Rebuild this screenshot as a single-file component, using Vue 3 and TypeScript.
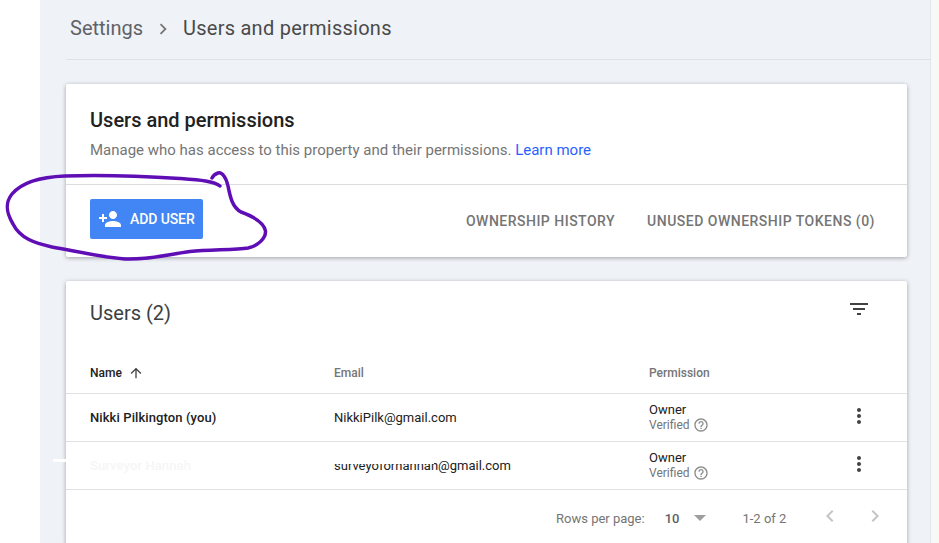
<script setup lang="ts">
interface UserRow {
  name: string
  email: string
  hidden: boolean
}

const users: UserRow[] = [
  { name: 'Nikki Pilkington (you)', email: 'NikkiPilk@gmail.com', hidden: false },
  { name: 'Surveyor Hannah', email: 'surveyoforhannah@gmail.com', hidden: true },
]
</script>

<template>
  <div class="page">
    <div class="gutter"></div>
    <main class="main">
      <header class="crumbs">
        <span class="crumb">Settings</span>
        <svg class="crumb-sep" viewBox="0 0 24 24" width="22" height="22" aria-hidden="true">
          <path d="M8.6 16.6 13.2 12 8.6 7.4 10 6l6 6-6 6z" fill="#757575" />
        </svg>
        <span class="crumb current">Users and permissions</span>
      </header>

      <section class="card top-card">
        <div class="intro">
          <h1>Users and permissions</h1>
          <p>Manage who has access to this property and their permissions. <a>Learn more</a></p>
        </div>
        <div class="actions">
          <button class="add-btn" type="button">
            <svg viewBox="0 0 24 24" width="24" height="24" aria-hidden="true">
              <path fill="#fff" d="M15 12c2.21 0 4-1.79 4-4s-1.79-4-4-4-4 1.79-4 4 1.79 4 4 4zm-9-2V7H4v3H1v2h3v3h2v-3h3v-2H6zm9 4c-2.67 0-8 1.34-8 4v2h16v-2c0-2.66-5.33-4-8-4z" />
            </svg>
            <span>ADD USER</span>
          </button>
          <div class="links">
            <span>OWNERSHIP HISTORY</span>
            <span>UNUSED OWNERSHIP TOKENS (0)</span>
          </div>
        </div>
      </section>

      <section class="card users-card">
        <div class="users-head">
          <h2>Users (2)</h2>
          <svg class="filter" viewBox="0 0 24 24" width="24" height="24" aria-hidden="true">
            <path fill="#424242" d="M10 18h4v-2h-4v2zM3 6v2h18V6H3zm3 7h12v-2H6v2z" />
          </svg>
        </div>
        <div class="row head-row">
          <div class="th name-th">
            <span>Name</span>
            <svg viewBox="0 0 24 24" width="16" height="16" aria-hidden="true">
              <path fill="#424242" d="M4 12l1.41 1.41L11 7.83V20h2V7.83l5.58 5.59L20 12l-8-8-8 8z" />
            </svg>
          </div>
          <div class="th grey">Email</div>
          <div class="th grey">Permission</div>
          <div></div>
        </div>
        <div v-for="u in users" :key="u.email" class="row body-row">
          <div class="name" :class="{ erased: u.hidden }">{{ u.name }}</div>
          <div class="email" :class="{ masked: u.hidden }">{{ u.email }}</div>
          <div class="perm">
            <div class="owner">Owner</div>
            <div class="verified">
              <span>Verified</span>
              <svg viewBox="0 0 24 24" width="16" height="16" aria-hidden="true">
                <path fill="#8a8a8a" d="M11 18h2v-2h-2v2zm1-16C6.48 2 2 6.48 2 12s4.48 10 10 10 10-4.48 10-10S17.52 2 12 2zm0 18c-4.41 0-8-3.59-8-8s3.59-8 8-8 8 3.59 8 8-3.59 8-8 8zm0-14c-2.21 0-4 1.79-4 4h2c0-1.1.9-2 2-2s2 .9 2 2c0 2-3 1.75-3 5h2c0-2.25 3-2.5 3-5 0-2.21-1.79-4-4-4z" />
              </svg>
            </div>
          </div>
          <svg class="more" viewBox="0 0 24 24" width="24" height="24" aria-hidden="true">
            <path fill="#424242" d="M12 8c1.1 0 2-.9 2-2s-.9-2-2-2-2 .9-2 2 .9 2 2 2zm0 2c-1.1 0-2 .9-2 2s.9 2 2 2 2-.9 2-2-.9-2-2-2zm0 6c-1.1 0-2 .9-2 2s.9 2 2 2 2-.9 2-2-.9-2-2-2z" />
          </svg>
        </div>
        <footer class="pager">
          <span class="rows-label">Rows per page:</span>
          <span class="rows-value">10</span>
          <span class="caret"></span>
          <span class="range">1-2 of 2</span>
          <svg viewBox="0 0 24 24" width="24" height="24" aria-hidden="true">
            <path fill="#c4c4c4" d="M15.4 7.4 14 6l-6 6 6 6 1.4-1.4-4.6-4.6z" />
          </svg>
          <svg class="next" viewBox="0 0 24 24" width="24" height="24" aria-hidden="true">
            <path fill="#c4c4c4" d="M8.6 16.6 13.2 12 8.6 7.4 10 6l6 6-6 6z" />
          </svg>
        </footer>
      </section>
    </main>
    <div class="edge"></div>

    <div class="whiteout"></div>
    <svg class="scribble" width="939" height="543" viewBox="0 0 939 543" aria-hidden="true">
      <path
        d="M220 186 C214 181 200 180 180 178.500 C140 176 95 175 65 176 C40 177 22 182 12 194 C4 204 7 214 13 224 C20 238 34 243 52 247 C75 251 100 257 125 259 C150 260 170 254 190 251.500 C210 249.500 235 250 248 248 C258 246 266 238 265.500 231 C264 222 252 216 241 212 C232 207 230 196 228 186 C226 177 222 172 218 173 C215 174 213 176 212 178"
        fill="none"
        stroke="#5f0db5"
        stroke-width="3.500"
        stroke-linecap="round"
        stroke-linejoin="round"
      />
    </svg>
  </div>
</template>

<style>
html,
body {
  margin: 0;
  background: #fff;
  overflow: hidden;
}
</style>

<style scoped>
.page {
  position: relative;
  display: flex;
  width: 939px;
  height: 543px;
  overflow: hidden;
  font-family: Roboto, "Liberation Sans", sans-serif;
  background: #fff;
}
.gutter {
  width: 40px;
  flex: none;
}
.main {
  flex: 1;
  min-width: 0;
  padding-left: 26px;
  background: #eff2f7;
}
.edge {
  width: 8px;
  flex: none;
  background: #f8f8f6;
  border-left: 1px solid #e4e6ea;
}
.crumbs {
  display: flex;
  align-items: center;
  height: 59px;
  padding-left: 4px;
  border-bottom: 1px solid #dfe2e7;
  font-size: 20px;
  color: #5f6368;
}
.crumb {
  position: relative;
  top: -2px;
}
.crumb.current {
  color: #4a4a4a;
  letter-spacing: 0.25px;
}
.crumb-sep {
  margin: -2px 9px 0;
}
.card {
  width: 841px;
  background: #fff;
  border-radius: 2px;
  box-shadow: 0 1px 4px rgba(60, 64, 67, 0.45);
}
.top-card {
  margin-top: 24px;
}
.intro {
  height: 101px;
  box-sizing: border-box;
  padding: 24px 24px 0;
  border-bottom: 1px solid #dadce0;
}
.intro h1 {
  margin: 0;
  font-size: 20px;
  font-weight: 500;
  line-height: 24px;
  color: #212121;
}
.intro p {
  margin: 8px 0 0;
  font-size: 15px;
  line-height: 20px;
  color: #757575;
}
.intro a {
  color: #2962ff;
}
.actions {
  display: flex;
  align-items: center;
  justify-content: space-between;
  height: 72px;
  box-sizing: border-box;
  padding: 0 32px 4px 24px;
}
.add-btn {
  display: flex;
  align-items: center;
  gap: 8px;
  width: 113px;
  height: 40px;
  padding: 0 0 0 8px;
  border: 0;
  border-radius: 2px;
  background: #4285f4;
  color: #fff;
  font-family: inherit;
  font-size: 14px;
  font-weight: 500;
  letter-spacing: -0.1px;
}
.add-btn svg {
  flex: none;
}
.links {
  display: flex;
  gap: 32px;
  padding-top: 4px;
  font-size: 14px;
  font-weight: 500;
  letter-spacing: 0.49px;
  color: #757575;
}
.users-card {
  margin-top: 24px;
}
.users-head {
  display: flex;
  align-items: center;
  justify-content: space-between;
  height: 64px;
  padding: 0 36px 0 24px;
}
.users-head h2 {
  margin: 0;
  font-size: 20px;
  font-weight: 400;
  color: #3c4043;
}
.filter {
  margin-top: -8px;
}
.row {
  display: grid;
  grid-template-columns: 244px 315px 198px 24px;
  align-items: center;
  padding-left: 24px;
  border-bottom: 1px solid #dfe1e5;
  font-size: 13px;
}
.head-row {
  height: 49px;
  box-sizing: border-box;
  padding-top: 7px;
  font-size: 12px;
  font-weight: 500;
  color: #212121;
}
.name-th {
  display: flex;
  align-items: center;
  gap: 6px;
}
.grey {
  color: #757575;
}
.body-row {
  height: 48px;
  box-sizing: border-box;
  color: #212121;
}
.name {
  font-weight: 500;
  letter-spacing: 0.1px;
}
.name.erased {
  color: #f6f6f6;
}
.email {
  position: relative;
}
.email.masked::after {
  content: "";
  position: absolute;
  left: -2px;
  top: 0;
  width: 102px;
  height: 6px;
  background: #fff;
}
.owner {
  font-size: 13px;
  line-height: 15px;
}
.verified {
  display: flex;
  align-items: center;
  gap: 3px;
  font-size: 12px;
  line-height: 15px;
  color: #757575;
}
.more {
  display: block;
  margin-top: -4px;
}
.pager {
  display: flex;
  align-items: center;
  height: 56px;
  padding-left: 490px;
  font-size: 13px;
  color: #757575;
}
.rows-value {
  margin-left: 20px;
  font-size: 13px;
  font-weight: 500;
  color: #616161;
}
.caret {
  margin-left: 15px;
  width: 0;
  height: 0;
  border: 6px solid transparent;
  border-top: 6px solid #9e9e9e;
  border-bottom: 0;
}
.range {
  margin-left: 36px;
  margin-right: 32px;
}
.pager svg {
  margin-top: -4px;
}
.pager .next {
  margin-left: 21px;
}
.whiteout {
  position: absolute;
  left: 53px;
  top: 459px;
  width: 14px;
  height: 3px;
  border-radius: 1px;
  background: #fff;
}
.scribble {
  position: absolute;
  left: 0;
  top: 0;
  pointer-events: none;
}
</style>
